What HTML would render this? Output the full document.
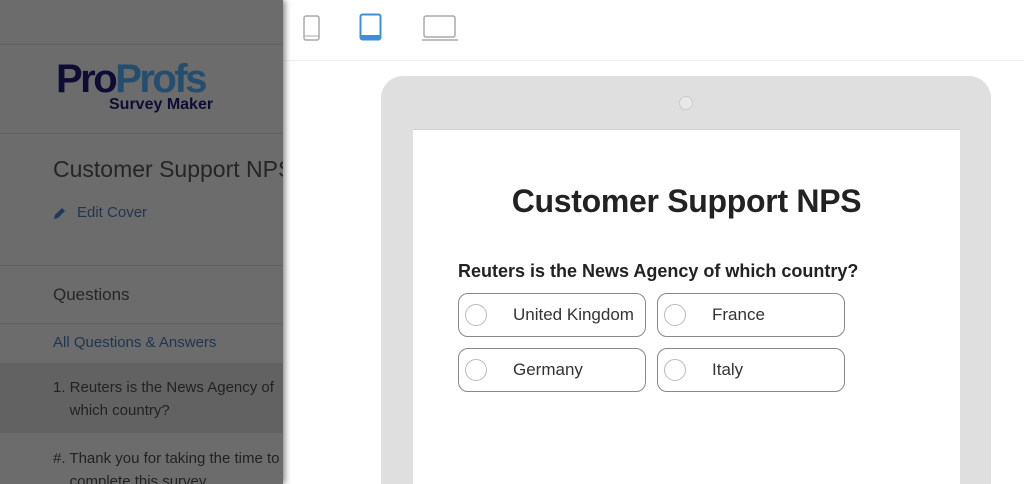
<!DOCTYPE html>
<html><head><style>
*{margin:0;padding:0;box-sizing:border-box}
html,body{width:1024px;height:484px;overflow:hidden}
body{background:#fff;font-family:"Liberation Sans",Arial,sans-serif;position:relative}
.left{position:absolute;left:0;top:0;width:283px;height:484px;background:#6c6c6c;box-shadow:2px 0 6px rgba(0,0,0,.5);z-index:2;overflow:hidden}
.hl{position:absolute;left:0;width:283px;height:1px;background:#5f5f5f}
.t{position:absolute;white-space:nowrap;color:#232323}
.right{position:absolute;left:283px;top:0;right:0;height:484px;overflow:hidden}
.opt{position:absolute;width:188px;height:44px;border:1px solid #888;border-radius:10px}
.opt i{position:absolute;left:6px;top:10px;width:22px;height:22px;border:1.5px solid #bbb;border-radius:50%}
.opt span{position:absolute;left:54px;top:11px;font-size:17px;color:#333}
</style></head><body>
<div class="left">
  <div class="hl" style="top:44px"></div>
  <div class="t" style="left:56px;top:59px;font-size:40px;line-height:40px;font-weight:bold;letter-spacing:-2.5px;color:#0e0c35">Pro<span style="color:#254d6e">Profs</span></div>
  <div class="t" style="left:109px;top:96px;font-size:16px;font-weight:bold;color:#0e0c35">Survey Maker</div>
  <div class="hl" style="top:133px"></div>
  <div class="t" style="left:53px;top:156px;font-size:23px;color:#252525">Customer Support NPS</div>
  <svg style="position:absolute;left:53px;top:206px" width="14" height="14" viewBox="0 0 14 14"><path d="M1 13l1-4 7-7 3 3-7 7z" fill="#1f3a5a"/></svg>
  <div class="t" style="left:77px;top:204px;font-size:15px;color:#1f3550">Edit Cover</div>
  <div class="hl" style="top:265px"></div>
  <div class="t" style="left:53px;top:285px;font-size:17px;color:#262626">Questions</div>
  <div class="hl" style="top:323px"></div>
  <div class="t" style="left:53px;top:334px;font-size:15px;color:#1f3550">All Questions &amp; Answers</div>
  <div style="position:absolute;left:0;top:363px;width:283px;height:70px;background:#626262"></div>
  <div class="t" style="left:53px;top:376px;font-size:15px;line-height:23px;color:#222">1. Reuters is the News Agency of<br>&nbsp;&nbsp;&nbsp;&nbsp;which country?</div>
  <div class="t" style="left:53px;top:447px;font-size:15px;line-height:23px;color:#222">#. Thank you for taking the time to<br>&nbsp;&nbsp;&nbsp;&nbsp;complete this survey.</div>
</div>
<div class="right">
  <svg style="position:absolute;left:20px;top:15px" width="18" height="27" viewBox="0 0 18 27"><rect x="1" y="1" width="15" height="24" rx="2" fill="none" stroke="#aaa" stroke-width="1.5"/><line x1="1" y1="21" x2="16" y2="21" stroke="#aaa"/></svg>
  <svg style="position:absolute;left:76px;top:13px" width="24" height="29" viewBox="0 0 24 29"><rect x="1.5" y="1.5" width="20" height="25" rx="2" fill="none" stroke="#3c8fd9" stroke-width="2"/><rect x="1.5" y="22" width="20" height="4" fill="#3c8fd9"/></svg>
  <svg style="position:absolute;left:139px;top:15px" width="36" height="27" viewBox="0 0 36 27"><rect x="2" y="1" width="31" height="21" rx="2" fill="none" stroke="#aaa" stroke-width="1.5"/><line x1="0" y1="25" x2="36" y2="25" stroke="#aaa" stroke-width="1.5"/></svg>
  <div style="position:absolute;left:0;right:0;top:60px;height:1px;background:#f0f0f0"></div>
  <div style="position:absolute;left:98px;top:76px;width:610px;height:408px;background:#dfdfdf;border-radius:22px 22px 0 0"></div>
  <div style="position:absolute;left:396px;top:96px;width:14px;height:14px;border-radius:50%;background:#e8e8e8;border:1px solid #ccc"></div>
  <div style="position:absolute;left:130px;top:129px;width:547px;height:355px;background:#fff;border-top:1px solid #d2d2d2"></div>
  <div class="t" style="left:130px;width:547px;text-align:center;top:183px;font-size:32px;font-weight:bold;color:#222;letter-spacing:-0.3px">Customer Support NPS</div>
  <div class="t" style="left:175px;top:261px;font-size:18px;font-weight:bold;color:#222">Reuters is the News Agency of which country?</div>
  <div class="opt" style="left:175px;top:293px"><i></i><span>United Kingdom</span></div>
  <div class="opt" style="left:374px;top:293px"><i></i><span>France</span></div>
  <div class="opt" style="left:175px;top:348px"><i></i><span>Germany</span></div>
  <div class="opt" style="left:374px;top:348px"><i></i><span>Italy</span></div>
</div>
</body></html>
